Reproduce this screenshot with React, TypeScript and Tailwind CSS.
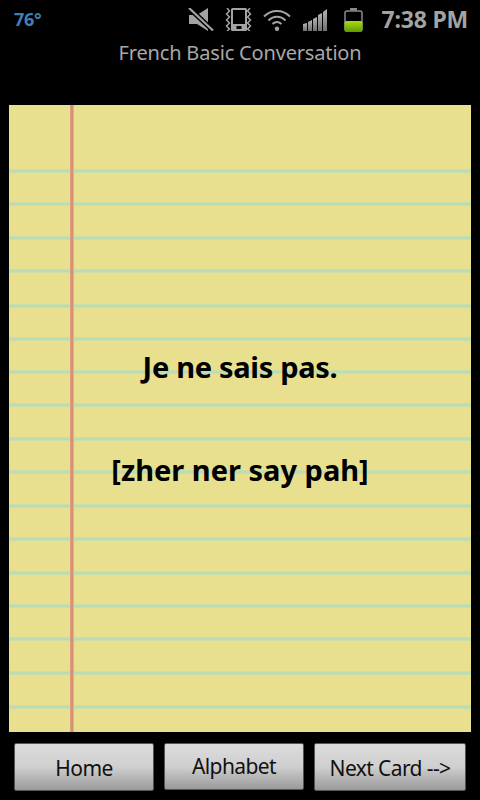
import React from 'react';

const RULE_LINES = [171, 204, 238, 271, 306, 339, 372, 405, 439, 472, 506, 539, 573, 606, 639, 673, 707];

const MuteIcon = () => (
  <svg width="26" height="23" viewBox="0 0 26 23">
    <path d="M1 7h8l11-7v23l-11-7H1z" fill="#a3a3a3" />
    <path d="M1 0l24 22.5" stroke="#000" strokeWidth="5" />
    <path d="M1 0l24 22.5" stroke="#a3a3a3" strokeWidth="2.2" />
  </svg>
);

const VibrateIcon = () => (
  <svg width="31" height="23" viewBox="0 0 31 23">
    <rect x="8" y="0" width="16" height="23" rx="1.5" fill="#a3a3a3" />
    <rect x="10" y="2" width="12" height="14" fill="#000" />
    <rect x="13.5" y="18" width="5" height="3" fill="#000" />
    <path d="M4 0l2.5 3-3 3 3 3-3 3 3 3-3 3 3 3-2.5 2" fill="none" stroke="#a3a3a3" strokeWidth="1.5" />
    <path d="M27 0l-2.5 3 3 3-3 3 3 3-3 3 3 3-3 3 2.5 2" fill="none" stroke="#a3a3a3" strokeWidth="1.5" />
  </svg>
);

const WifiIcon = () => (
  <svg width="28" height="22" viewBox="0 0 28 22">
    <path d="M1 7.5C8.5 0 19.5 0 27 7.5" fill="none" stroke="#a3a3a3" strokeWidth="2" />
    <path d="M5.5 11.5c5-5 12-5 17 0" fill="none" stroke="#a3a3a3" strokeWidth="2" />
    <path d="M9.5 15c3-2.6 6-2.6 9 0" fill="none" stroke="#a3a3a3" strokeWidth="2" />
    <circle cx="14" cy="19.8" r="2.2" fill="#a3a3a3" />
  </svg>
);

const SignalIcon = () => (
  <svg width="25" height="22" viewBox="0 0 25 22">
    <defs>
      <linearGradient id="sig" x1="0" y1="0" x2="0" y2="1">
        <stop offset="0" stopColor="#b5b5b5" />
        <stop offset="1" stopColor="#6f6f6f" />
      </linearGradient>
    </defs>
    <path d="M0 15l4-1v8H0z" fill="url(#sig)" />
    <path d="M5 13l4-2v11H5z" fill="url(#sig)" />
    <path d="M10 10l4-2v14h-4z" fill="url(#sig)" />
    <path d="M15 6l4-2v18h-4z" fill="url(#sig)" />
    <path d="M20 3l4-3v22h-4z" fill="url(#sig)" />
  </svg>
);

const BatteryIcon = () => (
  <svg width="19" height="24" viewBox="0 0 19 24">
    <defs>
      <linearGradient id="bat" x1="0" y1="0" x2="0" y2="1">
        <stop offset="0" stopColor="#a8dc10" />
        <stop offset="1" stopColor="#5f9a00" />
      </linearGradient>
    </defs>
    <rect x="6" y="0" width="7" height="2.5" fill="#8a8a8a" />
    <rect x="1" y="3" width="17" height="20" rx="2" fill="none" stroke="#8a8a8a" strokeWidth="1.5" />
    <rect x="0.5" y="13" width="18" height="11" rx="2" fill="url(#bat)" />
  </svg>
);

const BottomButton = ({ label, className }: { label: string; className: string }) => (
  <button className={`flex items-center justify-center rounded-[2px] border border-[#555] bg-gradient-to-b from-[#dcdcdc] via-[#cfcfcf] to-[#9a9a9a] text-[21px] tracking-[-0.6px] text-[#111] ${className}`}>
    {label}
  </button>
);

export default function App() {
  return (
    <div className="flex h-[800px] w-[480px] flex-col overflow-hidden bg-black font-['Noto_Sans','Open_Sans',sans-serif]">
      {/* Status bar */}
      <div className="flex h-[39px] items-center pl-[14px] pr-[12px]">
        <span className="text-[18px] font-bold tracking-[-0.3px] text-[#3f7fb5]">76°</span>
        <div className="ml-auto flex items-center">
          <MuteIcon />
          <div className="ml-[9px] flex"><VibrateIcon /></div>
          <div className="ml-[9px] flex"><WifiIcon /></div>
          <div className="ml-[12px] flex"><SignalIcon /></div>
          <div className="ml-[16px] flex"><BatteryIcon /></div>
          <span className="ml-[19px] text-[23px] font-bold leading-none tracking-[-0.2px] text-[#a3a3a3]">7:38 PM</span>
        </div>
      </div>

      {/* Title */}
      <div className="text-center text-[20px] leading-[28px] tracking-[-0.17px] text-[#a8a8a8]">French Basic Conversation</div>

      {/* Flash card */}
      <div className="relative ml-[9px] mt-[38px] flex h-[627px] w-[462px] flex-col items-center bg-[#e8e08e]">
        {RULE_LINES.map((y) => (
          <div key={y} className="absolute inset-x-0 h-[4px] bg-gradient-to-b from-[#d6dfa0] via-[#aedcc0] to-[#d6dfa0]" style={{ top: y - 107 }} />
        ))}
        <div className="absolute inset-y-0 left-[61px] flex w-[4px]">
          <div className="w-[1px] bg-[#dba080]" />
          <div className="w-[2px] bg-[#d98f78]" />
          <div className="w-[1px] bg-[#e0b088]" />
        </div>
        <div className="relative mt-[242px] text-[29px] font-bold leading-[40px] tracking-[-0.3px] text-black">Je ne sais pas.</div>
        <div className="relative mt-[63px] text-[29px] font-bold leading-[40px] text-black">[zher ner say pah]</div>
      </div>

      {/* Buttons */}
      <div className="mt-[11px] flex items-start pl-[14px]">
        <BottomButton label="Home" className="h-[48px] w-[140px] pt-[3px]" />
        <BottomButton label="Alphabet" className="ml-[10px] h-[47px] w-[140px] pt-[1px]" />
        <BottomButton label="Next Card -->" className="ml-[10px] h-[48px] w-[152px] pt-[3px]" />
      </div>
    </div>
  );
}
